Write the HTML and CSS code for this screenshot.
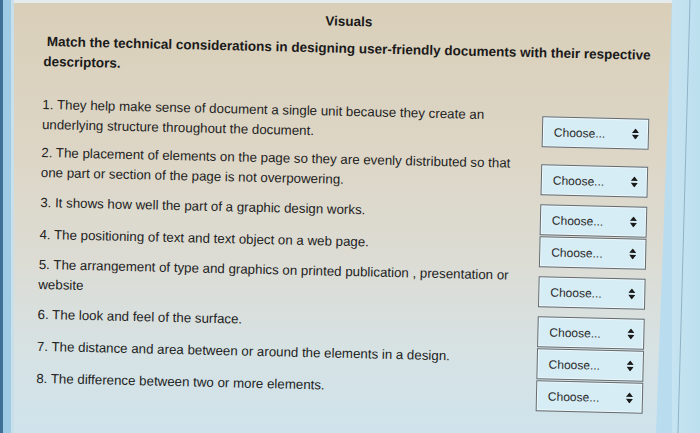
FILE: index.html
```html
<!DOCTYPE html>
<html lang="en">
<head>
<meta charset="utf-8">
<title>Visuals</title>
<link rel="stylesheet" href="styles.css">
</head>
<body>
<div class="screen">
  <div class="strip-left"></div>
  <main class="panel">
    <div class="content">
      <h1 class="title">Visuals</h1>
      <p class="lead">Match the technical considerations in designing user-friendly documents with their respective descriptors.</p>
      <div class="rows">
        <div class="row two">
          <p class="q">1. They help make sense of document a single unit because they create an<br>underlying structure throughout the document.</p>
          <div class="select"><span>Choose...</span><svg class="arrows" viewBox="0 0 7 11" width="7" height="11"><path d="M0 4.5L3.5 0L7 4.5Z M0 6.5L3.5 11L7 6.5Z"/></svg></div>
        </div>
        <div class="row two">
          <p class="q">2. The placement of elements on the page so they are evenly distributed so that<br>one part or section of the page is not overpowering.</p>
          <div class="select"><span>Choose...</span><svg class="arrows" viewBox="0 0 7 11" width="7" height="11"><path d="M0 4.5L3.5 0L7 4.5Z M0 6.5L3.5 11L7 6.5Z"/></svg></div>
        </div>
        <div class="row">
          <p class="q">3. It shows how well the part of a graphic design works.</p>
          <div class="select"><span>Choose...</span><svg class="arrows" viewBox="0 0 7 11" width="7" height="11"><path d="M0 4.5L3.5 0L7 4.5Z M0 6.5L3.5 11L7 6.5Z"/></svg></div>
        </div>
        <div class="row">
          <p class="q">4. The positioning of text and text object on a web page.</p>
          <div class="select"><span>Choose...</span><svg class="arrows" viewBox="0 0 7 11" width="7" height="11"><path d="M0 4.5L3.5 0L7 4.5Z M0 6.5L3.5 11L7 6.5Z"/></svg></div>
        </div>
        <div class="row two">
          <p class="q">5. The arrangement of type and graphics on printed publication , presentation or<br>website</p>
          <div class="select"><span>Choose...</span><svg class="arrows" viewBox="0 0 7 11" width="7" height="11"><path d="M0 4.5L3.5 0L7 4.5Z M0 6.5L3.5 11L7 6.5Z"/></svg></div>
        </div>
        <div class="row">
          <p class="q">6. The look and feel of the surface.</p>
          <div class="select"><span>Choose...</span><svg class="arrows" viewBox="0 0 7 11" width="7" height="11"><path d="M0 4.5L3.5 0L7 4.5Z M0 6.5L3.5 11L7 6.5Z"/></svg></div>
        </div>
        <div class="row">
          <p class="q">7. The distance and area between or around the elements in a design.</p>
          <div class="select"><span>Choose...</span><svg class="arrows" viewBox="0 0 7 11" width="7" height="11"><path d="M0 4.5L3.5 0L7 4.5Z M0 6.5L3.5 11L7 6.5Z"/></svg></div>
        </div>
        <div class="row">
          <p class="q">8. The difference between two or more elements.</p>
          <div class="select"><span>Choose...</span><svg class="arrows" viewBox="0 0 7 11" width="7" height="11"><path d="M0 4.5L3.5 0L7 4.5Z M0 6.5L3.5 11L7 6.5Z"/></svg></div>
        </div>
      </div>
    </div>
  </main>
  <div class="strip-right">
    <svg class="bezel" viewBox="0 0 28 433" width="28" height="433" preserveAspectRatio="none"><line x1="18" y1="0" x2="6" y2="433"/></svg>
  </div>
</div>
</body>
</html>
```
FILE: styles.css
```css
* { box-sizing: border-box; }
html, body { margin: 0; padding: 0; }
body {
  width: 700px;
  height: 433px;
  overflow: hidden;
  font-family: "Liberation Sans", Arial, sans-serif;
  background: #b9dcee;
}
.screen {
  display: flex;
  width: 700px;
  height: 433px;
}
.strip-left {
  width: 14px;
  flex: none;
  background: linear-gradient(to right, #3f6f96 0 3px, #9fcbe4 3px 11px, #c9e0ea 11px);
}
.panel {
  flex: 1;
  height: 433px;
  overflow: hidden;
  border-top: 3px solid #e6ecee;
  background: linear-gradient(to bottom, #d9cfb9 0%, #ddd6c6 35%, #dcdcd4 60%, #d6e2e4 82%, #cfe3ec 100%);
  clip-path: polygon(0 0, 100% 0, calc(100% - 16px) 100%, 0 100%);
}
.content {
  padding: 9px 25px 0 26px;
  transform: rotate(1.3deg);
  transform-origin: 336px 213px;
  color: #1a1a1a;
}
.title {
  margin: 0;
  text-align: center;
  font-size: 13.5px;
  line-height: 20px;
  font-weight: bold;
  padding-left: 2px;
}
.lead {
  margin: 7px 0 0;
  font-size: 13.5px;
  line-height: 19.5px;
  font-weight: bold;
  text-indent: 3px;
}
.rows {
  margin-top: 22px;
  display: flex;
  flex-direction: column;
}
.row {
  display: flex;
  align-items: center;
  justify-content: space-between;
  min-height: 32px;
}
.row.two { min-height: 48px; }
.q {
  margin: 0;
  font-size: 13.3px;
  line-height: 20px;
  color: #222;
  padding-bottom: 4px;
}
.select {
  width: 107px;
  height: 31px;
  margin: 4px 0 -3px;
  flex: none;
  display: flex;
  align-items: center;
  justify-content: space-between;
  padding: 0 9px 0 11px;
  background: #d6edf5;
  border: 1.5px solid #666a6d;
  box-shadow: inset 0 0 0 1px #eef7fa;
  font-size: 12px;
  color: #2b2b2b;
}
.arrows { fill: #1a1a1a; }
.strip-right {
  width: 28px;
  flex: none;
  background: linear-gradient(to right, #c6e4f1, #bcdfee);
}
.bezel { display: block; }
.bezel line { stroke: #8fb3c6; stroke-width: 1; }
```
